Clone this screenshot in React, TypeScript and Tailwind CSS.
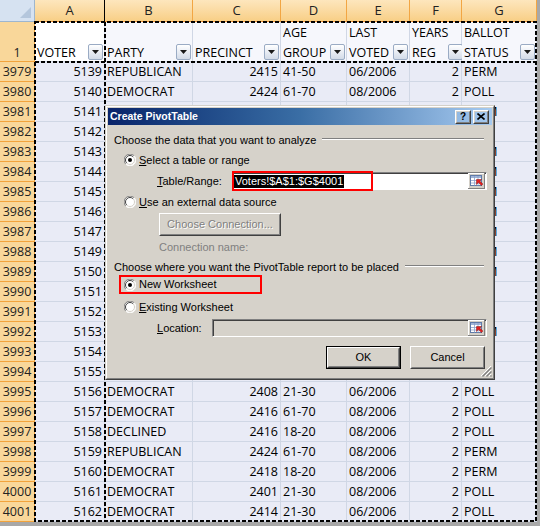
import React from 'react';

type Row = [number, number, string, number, string, string, number, string];

const rows: Row[] = [
  [3979, 5139, 'REPUBLICAN', 2415, '41-50', '06/2006', 2, 'PERM'],
  [3980, 5140, 'DEMOCRAT', 2424, '61-70', '08/2006', 2, 'POLL'],
  [3981, 5141, 'DEMOCRAT', 2418, '51-60', '08/2006', 2, 'PERM'],
  [3982, 5142, 'DEMOCRAT', 2401, '31-40', '08/2006', 2, 'POLL'],
  [3983, 5143, 'REPUBLICAN', 2424, '61-70', '08/2006', 2, 'PERM'],
  [3984, 5144, 'DEMOCRAT', 2414, '41-50', '06/2006', 2, 'PERM'],
  [3985, 5145, 'DECLINED', 2408, '21-30', '08/2006', 2, 'PERM'],
  [3986, 5146, 'REPUBLICAN', 2416, '51-60', '08/2006', 2, 'PERM'],
  [3987, 5147, 'DEMOCRAT', 2418, '61-70', '06/2006', 2, 'PERM'],
  [3988, 5149, 'DEMOCRAT', 2401, '41-50', '08/2006', 2, 'PERM'],
  [3989, 5150, 'REPUBLICAN', 2424, '31-40', '08/2006', 2, 'PERM'],
  [3990, 5151, 'DEMOCRAT', 2415, '21-30', '08/2006', 2, 'POLL'],
  [3991, 5152, 'DEMOCRAT', 2416, '18-20', '06/2006', 2, 'POLL'],
  [3992, 5153, 'REPUBLICAN', 2414, '61-70', '08/2006', 2, 'PERM'],
  [3993, 5154, 'DEMOCRAT', 2408, '41-50', '08/2006', 2, 'POLL'],
  [3994, 5155, 'DECLINED', 2418, '51-60', '08/2006', 2, 'POLL'],
  [3995, 5156, 'DEMOCRAT', 2408, '21-30', '06/2006', 2, 'POLL'],
  [3996, 5157, 'DEMOCRAT', 2416, '61-70', '08/2006', 2, 'POLL'],
  [3997, 5158, 'DECLINED', 2416, '18-20', '08/2006', 2, 'POLL'],
  [3998, 5159, 'REPUBLICAN', 2424, '61-70', '08/2006', 2, 'PERM'],
  [3999, 5160, 'DEMOCRAT', 2418, '18-20', '08/2006', 2, 'PERM'],
  [4000, 5161, 'DEMOCRAT', 2401, '21-30', '08/2006', 2, 'POLL'],
  [4001, 5162, 'DEMOCRAT', 2414, '21-30', '06/2006', 2, 'POLL'],
];

const cols = ['A', 'B', 'C', 'D', 'E', 'F', 'G'];
const heads: [string, string][] = [
  ['', 'VOTER'],
  ['', 'PARTY'],
  ['', 'PRECINCT'],
  ['AGE', 'GROUP'],
  ['LAST', 'VOTED'],
  ['YEARS', 'REG'],
  ['BALLOT', 'STATUS'],
];
const rightCols = [0, 2, 5];

function FilterButton() {
  return (
    <span className="mb-[1px] flex h-[16px] w-[15px] shrink-0 items-center justify-center rounded-[2px] border border-[#9aabc4] bg-linear-to-b from-white to-[#d3dbe8]">
      <svg width="7" height="4" viewBox="0 0 7 4">
        <path d="M0 0h7L3.5 4z" fill="#1a1a1a" />
      </svg>
    </span>
  );
}

function Sheet() {
  return (
    <div className="grid w-[537px] grid-cols-[35px_70px_88px_88px_66px_63px_52px_75px] font-['Open_Sans',sans-serif] text-[12.5px] text-black">
      <div className="relative h-[22px] border-r border-b border-[#9eb6ce] bg-[#d6e2f1]">
        <svg className="absolute right-[3px] bottom-[3px]" width="11" height="11" viewBox="0 0 11 11">
          <path d="M11 0v11H0z" fill="#b4c6dc" />
        </svg>
      </div>
      {cols.map((c, i) => (
        <div
          key={c}
          className={`flex h-[22px] items-center justify-center border-r border-b border-r-[#f2a643] border-b-[#f29536] bg-linear-to-b from-[#fde6bd] to-[#f8cf86] text-[13px] text-[#222] ${i === 0 ? 'border-r-black' : ''}`}
        >
          {c}
        </div>
      ))}

      <div className="flex h-[40px] items-end justify-center border-r border-b border-[#f2a33c] bg-[#f9d79a] text-[#222]">
        <span className="-mb-[2px] leading-[20px]">1</span>
      </div>
      {heads.map(([a, b], i) => (
        <div
          key={b}
          className={`flex h-[40px] items-end justify-between border-r border-b border-[#d0d7e5] pl-[2px] pr-[1px] ${i === 0 ? 'bg-white' : 'bg-[#f6f7fc]'}`}
        >
          <div className="-mb-[2px] flex flex-col leading-[20px]">
            {a && <span>{a}</span>}
            <span>{b}</span>
          </div>
          <FilterButton />
        </div>
      ))}

      {rows.map((r) => (
        <React.Fragment key={r[0]}>
          <div className="h-[20px] border-r border-b border-[#f2a33c] bg-[#f9d79a] text-center leading-[19px] text-[#222]">{r[0]}</div>
          {r.slice(1).map((v, i) => (
            <div
              key={i}
              className={`h-[20px] overflow-hidden border-r border-b border-[#d0d7e5] bg-[#e9ebf6] px-[2px] leading-[19px] whitespace-nowrap ${rightCols.includes(i) ? 'text-right' : 'text-left'}`}
            >
              {v}
            </div>
          ))}
        </React.Fragment>
      ))}
    </div>
  );
}

function Marquee() {
  return (
    <svg className="pointer-events-none absolute left-0 top-0" width="540" height="526">
      <g stroke="#000" strokeWidth="2" strokeDasharray="4 2" fill="none">
        <rect x="35" y="22" width="501" height="499" />
        <line x1="35" y1="62" x2="536" y2="62" />
        <line x1="105" y1="22" x2="105" y2="521" />
      </g>
    </svg>
  );
}

function Radio({ checked }: { checked?: boolean }) {
  return (
    <svg width="12" height="12" viewBox="0 0 12 12" className="shrink-0">
      <circle cx="6" cy="6" r="5.5" fill="#fff" />
      <path d="M1.8 10.2A5.5 5.5 0 0 1 10.2 1.8" stroke="#808080" fill="none" />
      <path d="M10.2 1.8A5.5 5.5 0 0 1 1.8 10.2" stroke="#fff" fill="none" />
      <path d="M2.8 9.2A4.5 4.5 0 0 1 9.2 2.8" stroke="#404040" fill="none" />
      <path d="M9.2 2.8A4.5 4.5 0 0 1 2.8 9.2" stroke="#d4d0c8" fill="none" />
      {checked && <circle cx="6" cy="6" r="2" fill="#000" />}
    </svg>
  );
}

function RangeIcon() {
  return (
    <svg width="17" height="16" viewBox="0 0 17 16" className="shrink-0">
      <rect x="0" y="0" width="17" height="16" fill="#d4d0c8" />
      <path d="M0 15.5h17M16.5 0v16" stroke="#808080" />
      <path d="M0 0.5h16M0.5 0v15" stroke="#fff" />
      <rect x="2.5" y="2.5" width="11" height="10" fill="#fff" stroke="#5f7aa8" />
      <rect x="3" y="3" width="10" height="2" fill="#9fb4d8" />
      <path d="M3 7.5h10M3 10h10M6.5 3v9.5M10 3v9.5" stroke="#8aa0c8" strokeWidth="0.8" />
      <path d="M8.5 6.5l5 0-1.6 1.6 3 3-1.5 1.5-3-3-1.9 1.9z" fill="#e02020" stroke="#8a1010" strokeWidth="0.5" />
    </svg>
  );
}

function Btn({ children, def, className = '' }: { children: React.ReactNode; def?: boolean; className?: string }) {
  return (
    <div className={`${def ? 'border border-black' : ''} ${className}`}>
      <div className="h-full border border-t-white border-l-white border-r-[#404040] border-b-[#404040]">
        <div className="flex h-full items-center justify-center border border-t-[#d4d0c8] border-l-[#d4d0c8] border-r-[#808080] border-b-[#808080]">
          {children}
        </div>
      </div>
    </div>
  );
}

function GroupLabel({ children, className = '' }: { children: React.ReactNode; className?: string }) {
  return (
    <div className={`flex h-[14px] items-center pl-[6px] pr-[8px] ${className}`}>
      <span>{children}</span>
      <span className="ml-[6px] mt-[-3px] h-[2px] flex-1 border-t border-b border-t-[#808080] border-b-white" />
    </div>
  );
}

function Dialog() {
  return (
    <div className="absolute left-[105px] top-[105px] h-[275px] w-[390px] border border-t-[#d4d0c8] border-l-[#d4d0c8] border-r-[#404040] border-b-[#404040] font-['Liberation_Sans',Arial,sans-serif] text-[11px] text-black">
      <div className="relative flex h-full flex-col border border-t-white border-l-white border-r-[#808080] border-b-[#808080] bg-[#d6d2ca] p-[1px]">
        <div className="flex h-[17px] shrink-0 items-center justify-between bg-linear-to-r from-[#0a246a] via-[#3a6ea5] to-[#a6caf0] pl-[2px] pr-[3px]">
          <span className="text-[10.5px] font-bold text-white">Create PivotTable</span>
          <div className="flex gap-[2px]">
            <Btn className="h-[14px] w-[16px]">
              <span className="text-[10px] font-bold leading-none">?</span>
            </Btn>
            <Btn className="h-[14px] w-[16px]">
              <svg width="8" height="7" viewBox="0 0 8 7">
                <path d="M0.5 0.5l7 6M7.5 0.5l-7 6" stroke="#000" strokeWidth="1.6" />
              </svg>
            </Btn>
          </div>
        </div>

        <GroupLabel className="mt-[8px]">Choose the data that you want to analyze</GroupLabel>

        <div className="mt-[6px] flex h-[14px] items-center pl-[16px]">
          <Radio checked />
          <span className="ml-[3px]">
            <u>S</u>elect a table or range
          </span>
        </div>

        <div className="mt-[5px] flex h-[18px] items-center pl-[49px] pr-[5px]">
          <span className="w-[75px] shrink-0">
            <u>T</u>able/Range:
          </span>
          <div className="relative flex h-[18px] flex-1 items-center border border-t-[#808080] border-l-[#808080] border-r-white border-b-white bg-white shadow-[inset_1px_1px_0_#404040]">
            <span className="ml-[1px] bg-black px-[1px] leading-[13px] text-white">Voters!$A$1:$G$4001</span>
            <span className="ml-auto mr-[1px]">
              <RangeIcon />
            </span>
            <span className="absolute -left-[1px] -top-[2px] h-[20px] w-[141px] border-2 border-[#f00]" />
          </div>
        </div>

        <div className="mt-[5px] flex h-[14px] items-center pl-[16px]">
          <Radio />
          <span className="ml-[3px]">
            <u>U</u>se an external data source
          </span>
        </div>

        <Btn className="ml-[51px] mt-[4px] h-[23px] w-[122px]">
          <span className="text-[#808080] [text-shadow:1px_1px_0_#fff]">Choose Connection...</span>
        </Btn>

        <div className="mt-[4px] flex h-[14px] items-center pl-[51px] text-[#808080]">Connection name:</div>

        <GroupLabel className="mt-[6px]">Choose where you want the PivotTable report to be placed</GroupLabel>

        <div className="ml-[11px] mt-[1px] flex h-[19px] w-[143px] items-center border-2 border-[#f00] pl-[3px]">
          <Radio checked />
          <span className="ml-[3px]">New Worksheet</span>
        </div>

        <div className="mt-[6px] flex h-[14px] items-center pl-[16px]">
          <Radio />
          <span className="ml-[3px]">
            <u>E</u>xisting Worksheet
          </span>
        </div>

        <div className="mt-[5px] flex h-[18px] items-center pl-[49px] pr-[5px]">
          <span className="w-[55px] shrink-0">
            <u>L</u>ocation:
          </span>
          <div className="flex h-[18px] flex-1 items-center border border-t-[#808080] border-l-[#808080] border-r-white border-b-white bg-[#d6d2ca] shadow-[inset_1px_1px_0_#404040]">
            <span className="ml-auto mr-[1px]">
              <RangeIcon />
            </span>
          </div>
        </div>

        <div className="mt-[9px] flex justify-end gap-[9px] pr-[7px]">
          <Btn def className="h-[23px] w-[75px]">
            OK
          </Btn>
          <Btn className="h-[23px] w-[75px]">Cancel</Btn>
        </div>

        <svg className="absolute right-[1px] bottom-[1px]" width="12" height="12" viewBox="0 0 12 12">
          <path d="M11 1L1 11M11 5L5 11M11 9L9 11" stroke="#fff" />
          <path d="M11.5 2.5L2.5 11.5M11.5 6.5L6.5 11.5M11.5 10.5L10.5 11.5" stroke="#808080" strokeWidth="1.3" />
        </svg>
      </div>
    </div>
  );
}

export default function App() {
  return (
    <div className="relative h-[526px] w-[540px] overflow-hidden bg-[#a8a8a8]">
      <Sheet />
      <Marquee />
      <Dialog />
    </div>
  );
}
